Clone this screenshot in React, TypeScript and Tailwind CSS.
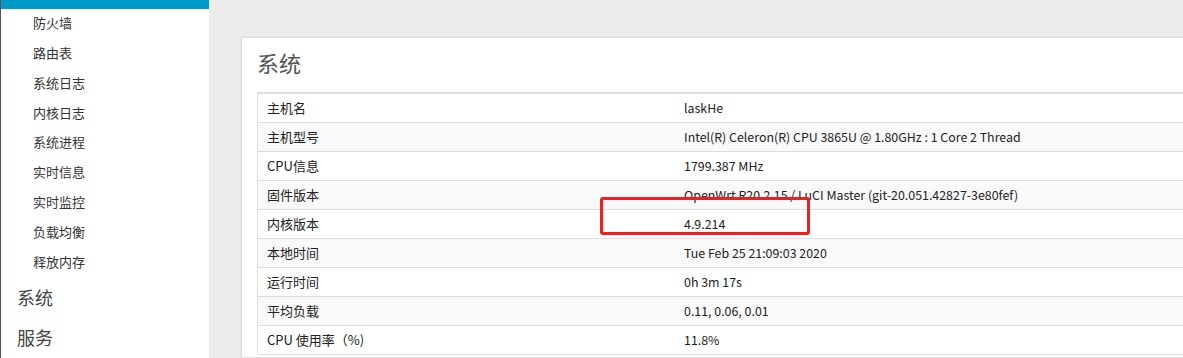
import React from "react";

const font = "font-['Noto_Sans_CJK_SC','Noto_Sans',sans-serif]";

const subMenu = ["防火墙", "路由表", "系统日志", "内核日志", "系统进程", "实时信息", "实时监控", "负载均衡", "释放内存"];

const rows: [string, string][] = [
  ["主机名", "laskHe"],
  ["主机型号", "Intel(R) Celeron(R) CPU 3865U @ 1.80GHz : 1 Core 2 Thread"],
  ["CPU信息", "1799.387 MHz"],
  ["固件版本", "OpenWrt R20.2.15 / LuCI Master (git-20.051.42827-3e80fef)"],
  ["内核版本", "4.9.214"],
  ["本地时间", "Tue Feb 25 21:09:03 2020"],
  ["运行时间", "0h 3m 17s"],
  ["平均负载", "0.11, 0.06, 0.01"],
  ["CPU 使用率（%)", "11.8%"],
];

const App = () => {
  return (
    <div className={`flex h-[358px] w-[1183px] overflow-hidden bg-[#ececec] ${font}`}>
      {/* ====== Sidebar */}
      <aside className="flex w-[209px] shrink-0 flex-col border-l border-[#5e524c] bg-white">
        <div className="h-[9px] bg-[#0099cc]" />
        <ul className="-mt-[1px] text-[13px] text-[#333]">
          {subMenu.map((item) => (
            <li key={item} className="flex h-[29.8px] items-center pl-[32px]">
              {item}
            </li>
          ))}
        </ul>
        <div className="mt-[1px] flex h-[40px] items-center pl-[16px] text-[18px] text-[#444]">系统</div>
        <div className="flex h-[40px] items-center pl-[16px] text-[18px] text-[#444]">服务</div>
      </aside>

      {/* ====== Main */}
      <main className="flex-1 pl-[32px] pt-[37px]">
        <section className="relative h-full w-[1000px] border border-[#dedede] bg-white pl-[15px] shadow-[0_0_2px_rgba(0,0,0,0.08)]">
          <h2 className="flex h-[54px] items-center pb-[5px] text-[22px] text-[#555]">系统</h2>
          <div className="border-t-2 border-l border-[#dddddd]">
            {rows.map(([label, value], i) => (
              <div
                key={label}
                className={`flex h-[29px] items-center border-b border-[#dddddd] text-[13px] text-[#222] ${
                  i % 2 === 1 ? "bg-[#f9f9f9]" : "bg-white"
                }`}
              >
                <div className="w-[426px] shrink-0 pl-[9px]">{label}</div>
                <div className="text-[12.4px]">{value}</div>
              </div>
            ))}
          </div>
          {/* highlight box */}
          <div className="absolute left-[358px] top-[159px] h-[38px] w-[210px] rounded-[3px] border-[3px] border-[#f01e1e]" />
        </section>
      </main>
    </div>
  );
};

export default App;
